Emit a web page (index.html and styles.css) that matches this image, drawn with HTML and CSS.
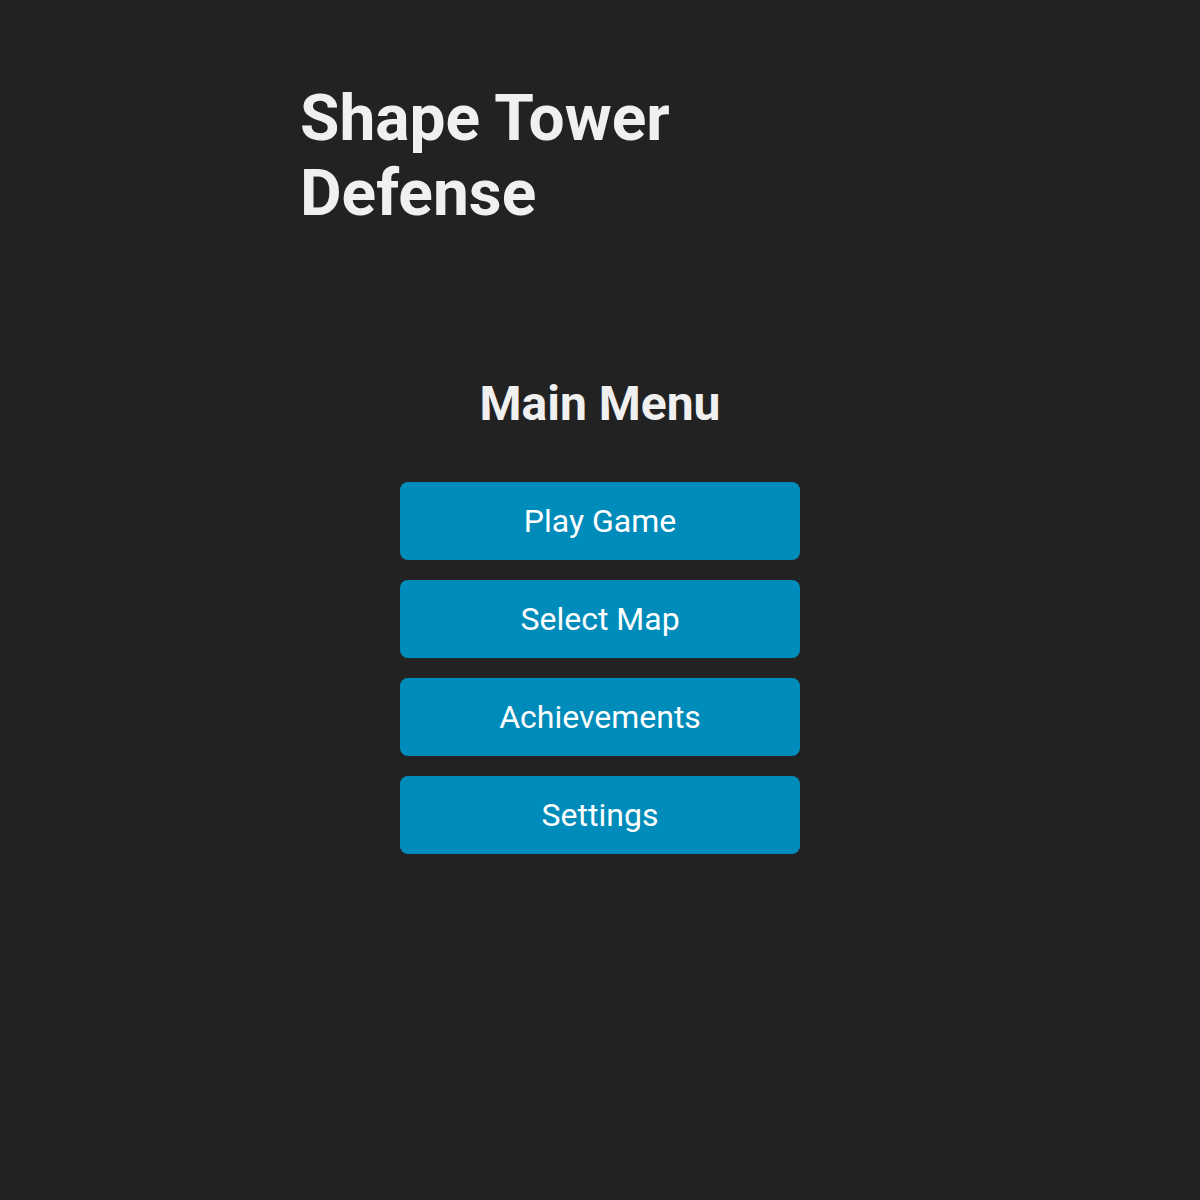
FILE: index.html
```html
<html>
    <head>
        <link rel="stylesheet" href="styles.css">
    </head>
    <body>
        <div class="page">
            <h1 class="title">Shape Tower<br>Defense</h1>
            <div class="menu">
                <h2 class="menu-title">Main Menu</h2>
                <div class="menu-buttons">
                    <button class="menu-btn">Play Game</button>
                    <button class="menu-btn">Select Map</button>
                    <button class="menu-btn">Achievements</button>
                    <button class="menu-btn">Settings</button>
                </div>
            </div>
        </div>
    </body>
</html>
```

FILE: styles.css
```css
body {
    margin: 0;
    background-color: #222222;
    color: #f0f0f0;
    font-family: Roboto, "Liberation Sans", sans-serif;
    min-height: 1200px;
}
.page {
    width: 600px;
    margin: 0 auto;
    padding-top: 81px;
}
.title {
    margin: 0;
    font-size: 64px;
    font-weight: 700;
    line-height: 75px;
}
.menu {
    margin-top: 144px;
    display: flex;
    flex-direction: column;
    align-items: center;
}
.menu-title {
    margin: 0 0 50px 0;
    font-size: 48px;
    font-weight: 700;
    line-height: 57px;
}
.menu-buttons {
    display: flex;
    flex-direction: column;
    gap: 20px;
}
.menu-btn {
    width: 400px;
    height: 78px;
    padding: 0;
    border: none;
    border-radius: 8px;
    background-color: #008cba;
    color: #ffffff;
    font-family: Roboto, "Liberation Sans", sans-serif;
    font-size: 32px;
    cursor: pointer;
}
```
